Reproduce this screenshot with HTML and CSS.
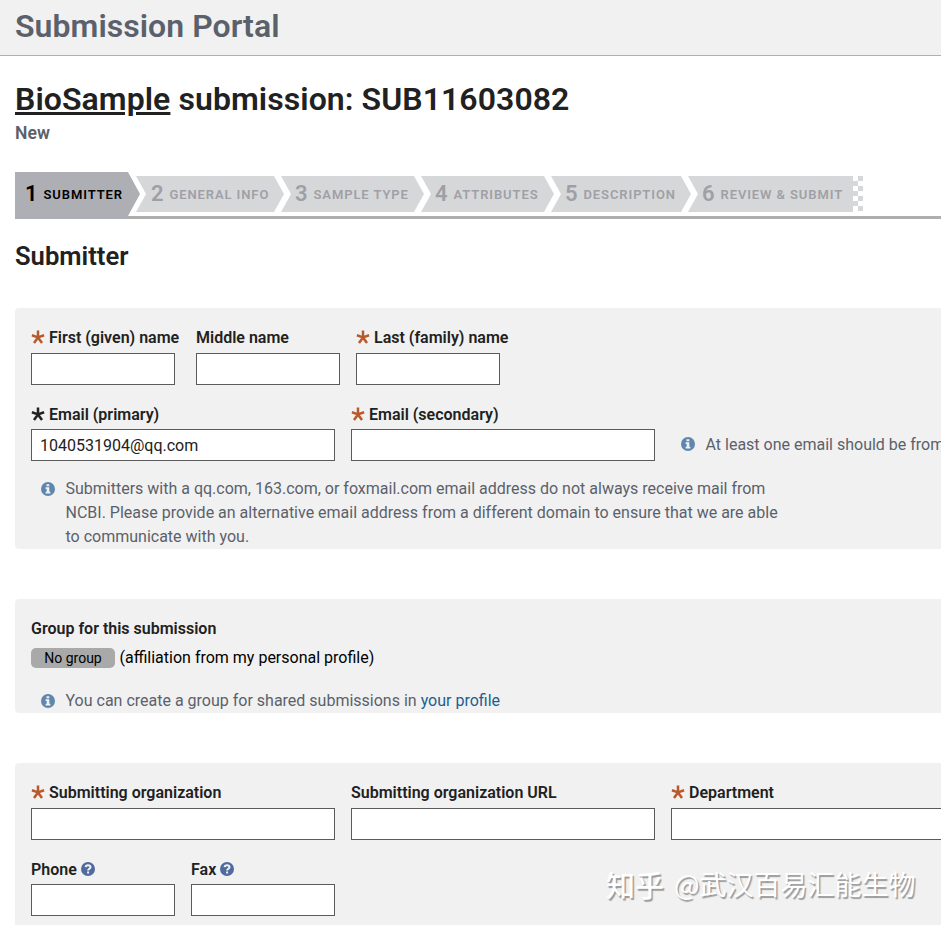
FILE: index.html
```html
<!DOCTYPE html>
<html lang="en">

<head>
    <meta charset="UTF-8">
    <meta name="viewport" content="width=device-width, initial-scale=1.0">
    <title>BioSample submission: SUB11603082</title>
    <link rel="stylesheet" href="styles.css">
</head>

<body>
    <!-- Shared icons -->
    <svg class="icon-defs" width="0" height="0">
        <symbol id="icon-star" viewBox="0 0 14 14">
            <path d="M7 7.4V.6M7 7.4L.9 5.3M7 7.4l6.1-2.1M7 7.4l-4 5.6M7 7.4l4 5.6" fill="none" stroke="currentColor" stroke-width="2.5" />
        </symbol>
        <symbol id="icon-info" viewBox="0 0 14 14">
            <circle cx="7" cy="7" r="7" fill="currentColor" />
            <path d="M5.5 2.2h2.8v2.100H5.500zM4.600 5.300h3.700v4.500h1.100v1.800H4.600V9.800h1.100V7.100H4.600z" fill="#f1f1f1" />
        </symbol>
        <symbol id="icon-help" viewBox="0 0 14 14">
            <circle cx="7" cy="7" r="7" fill="currentColor" />
            <path d="M4.600 5.200C4.800 3.900 5.700 3.300 7 3.300c1.500 0 2.500.7 2.500 1.900C9.500 6.800 7.100 6.800 7.100 8.600" fill="none" stroke="#f1f1f1" stroke-width="2" />
            <path d="M6.100 9.500h2v2h-2z" fill="#f1f1f1" />
        </symbol>
    </svg>

    <header class="portal-header">
        <div class="portal-title">Submission Portal</div>
    </header>

    <main>
        <h1><a href="#">BioSample</a> submission: SUB11603082</h1>
        <p class="status">New</p>

        <ol class="steps">
            <li class="step active"><b>1</b><span>Submitter</span></li>
            <li class="step general"><b>2</b><span>General info</span></li>
            <li class="step sample"><b>3</b><span>Sample type</span></li>
            <li class="step attributes"><b>4</b><span>Attributes</span></li>
            <li class="step description"><b>5</b><span>Description</span></li>
            <li class="step review"><b>6</b><span>Review &amp; submit</span></li>
            <li class="finish"></li>
        </ol>

        <h2>Submitter</h2>

        <section class="panel submitter">
            <div class="row">
                <div class="field first-name">
                    <label for="first"><svg class="star"><use href="#icon-star" /></svg>First (given) name</label>
                    <input id="first" type="text">
                </div>
                <div class="field">
                    <label for="middle">Middle name</label>
                    <input id="middle" type="text">
                </div>
                <div class="field">
                    <label for="last"><svg class="star"><use href="#icon-star" /></svg>Last (family) name</label>
                    <input id="last" type="text">
                </div>
            </div>
            <div class="row second">
                <div class="field wide">
                    <label for="email"><svg class="star dark"><use href="#icon-star" /></svg>Email (primary)</label>
                    <input id="email" type="text" value="1040531904@qq.com">
                </div>
                <div class="field wide">
                    <label for="email2"><svg class="star"><use href="#icon-star" /></svg>Email (secondary)</label>
                    <input id="email2" type="text">
                </div>
                <p class="note side-note"><svg class="info"><use href="#icon-info" /></svg><span>At least one email should be from</span></p>
            </div>
            <p class="note email-note"><svg class="info"><use href="#icon-info" /></svg><span>Submitters with a qq.com, 163.com, or foxmail.com email address do not always receive mail from NCBI. Please provide an alternative email address from a different domain to ensure that we are able to communicate with you.</span></p>
        </section>

        <section class="panel group">
            <h3>Group for this submission</h3>
            <div class="group-choice"><span class="pill">No group</span><span>(affiliation from my personal profile)</span></div>
            <p class="note"><svg class="info"><use href="#icon-info" /></svg><span>You can create a group for shared submissions in <a href="#">your profile</a></span></p>
        </section>

        <section class="panel organization">
            <div class="row">
                <div class="field wide">
                    <label for="org"><svg class="star"><use href="#icon-star" /></svg>Submitting organization</label>
                    <input id="org" type="text">
                </div>
                <div class="field wide">
                    <label for="url">Submitting organization URL</label>
                    <input id="url" type="text">
                </div>
                <div class="field wide">
                    <label for="department"><svg class="star"><use href="#icon-star" /></svg>Department</label>
                    <input id="department" type="text">
                </div>
            </div>
            <div class="row second">
                <div class="field">
                    <label for="phone">Phone<svg class="help"><use href="#icon-help" /></svg></label>
                    <input id="phone" type="text">
                </div>
                <div class="field">
                    <label for="fax">Fax<svg class="help"><use href="#icon-help" /></svg></label>
                    <input id="fax" type="text">
                </div>
            </div>
        </section>
    </main>

    <div class="watermark" lang="zh-CN"><b>知乎</b><span>@武汉百易汇能生物</span></div>
</body>

</html>
```
FILE: styles.css
```css
* {
    box-sizing: border-box;
}

body {
    margin: 0;
    height: 925px;
    overflow: hidden;
    font-family: Roboto, "Liberation Sans", sans-serif;
    font-size: 16px;
    line-height: 24px;
    color: #212121;
    background: #fff;
}

h1, h2, h3, p, ol {
    margin: 0;
    padding: 0;
}

.icon-defs {
    display: block;
}

.portal-header {
    height: 56px;
    padding: 6px 15px 0;
    background: #f1f1f1;
    border-bottom: 1px solid #aeb0b5;
}

.portal-title {
    font-size: 32px;
    line-height: 40px;
    font-weight: 600;
    letter-spacing: 0.05px;
    color: #5b616b;
}

main {
    padding: 23px 0 0 15px;
}

h1 {
    font-size: 32px;
    line-height: 40px;
    font-weight: 600;
    letter-spacing: 0.07px;
}

h1 a {
    color: inherit;
}

.status {
    margin-top: 1px;
    font-size: 17.6px;
    line-height: 26px;
    font-weight: 600;
    color: #5b616b;
}

/* Progress steps */
.steps {
    display: flex;
    height: 47px;
    margin-top: 26px;
    border-bottom: 3px solid #aeaeae;
    list-style: none;
}

.step {
    display: flex;
    flex: none;
    align-items: center;
    height: 36px;
    margin: 4px 0 0 -3px;
    padding-left: 14px;
    background: #d6d7d9;
    color: #9fa0a5;
    font-size: 13px;
    font-weight: 600;
    letter-spacing: 0.9px;
    text-transform: uppercase;
    white-space: nowrap;
    clip-path: polygon(0 0, calc(100% - 10px) 0, 100% 50%, calc(100% - 10px) 100%, 0 100%, 10px 50%);
}

.step b {
    width: 18.5px;
    font-size: 22px;
    font-weight: 600;
    letter-spacing: 0;
}

.step span {
    padding-top: 2px;
}

.step.active {
    width: 125px;
    height: 47px;
    margin: 0;
    padding: 0 0 3px 10px;
    background: #aeaeb5;
    color: #000;
    clip-path: polygon(0 0, 113px 0, 100% 22px, 113px 44px, 113px 100%, 0 100%);
}

.step.general {
    width: 148px;
    margin-left: -4px;
    padding-left: 15px;
}

.sample {
    width: 143px;
}

.attributes {
    width: 133px;
}

.description {
    width: 140px;
}

.review {
    width: 165px;
    clip-path: polygon(0 0, 100% 0, 100% 100%, 0 100%, 10px 50%);
}

.finish {
    width: 10px;
    height: 35px;
    margin-top: 4px;
    background: conic-gradient(#d6d7d9 25%, #fff 0 50%, #d6d7d9 0 75%, #fff 0) 0 0 / 10px 10px;
}

h2 {
    margin-top: 20px;
    font-size: 25.6px;
    line-height: 34px;
    font-weight: 600;
}

/* Form panels */
.panel {
    margin-bottom: 50px;
    padding: 18px 0 0 16px;
    background: #f1f1f1;
    border-radius: 4px 0 0 4px;
}

.submitter {
    height: 241px;
    margin-top: 35px;
}

.group {
    height: 114px;
}

.panel.organization {
    height: 162px;
    margin-bottom: 0;
    border-radius: 4px 0 0 0;
}

.row {
    display: flex;
    gap: 16px;
    overflow: hidden;
}

.row.second {
    margin-top: 18px;
}

.field {
    flex: none;
    width: 144px;
}

.field.first-name {
    width: 149px;
}

.field.wide {
    width: 304px;
}

label {
    display: flex;
    align-items: center;
    margin-bottom: 3px;
    font-weight: 600;
    white-space: nowrap;
}

.second label {
    margin-bottom: 2px;
}

input {
    display: block;
    width: 144px;
    height: 32px;
    padding: 0 8px;
    border: 1px solid #5b5b5b;
    background: #fff;
    color: #212121;
    font: inherit;
}

.wide input {
    width: 304px;
}

.star {
    flex: none;
    width: 14px;
    height: 14px;
    margin: 0 4px 2px 0;
    color: #b9592b;
}

.star.dark {
    color: #212121;
}

.info {
    flex: none;
    width: 14px;
    height: 14px;
    margin: 5px 10.5px 0 0;
    color: #5f87ae;
}

.help {
    width: 14px;
    height: 14px;
    margin: 0 0 2px 4px;
    color: #4f6a9e;
}

.note {
    display: flex;
    padding-left: 10px;
    color: #5b616b;
}

.note a {
    color: #205f93;
    text-decoration: none;
}

.side-note {
    margin-top: 30px;
    white-space: nowrap;
}

.side-note .info {
    margin-top: 4px;
}

.email-note {
    width: 760px;
    margin-top: 16px;
}

h3 {
    font-size: 16px;
    font-weight: 600;
}

.group-choice {
    display: flex;
    align-items: center;
    margin-top: 5px;
    gap: 4.5px;
    color: #000;
}

.pill {
    width: 84px;
    height: 20px;
    border-radius: 5px;
    background: #a9a9a9;
    font-size: 14px;
    line-height: 20px;
    text-align: center;
}

.group .note {
    margin-top: 19px;
}

.watermark {
    position: absolute;
    left: 606px;
    top: 864px;
    display: flex;
    gap: 10px;
    font-family: "Noto Sans CJK SC", sans-serif;
    font-size: 27px;
    line-height: 40px;
    color: #fff;
    text-shadow: 1.5px 1.5px 1px #999;
    white-space: nowrap;
}

.watermark b {
    font-size: 29px;
    font-weight: 500;
}
```
